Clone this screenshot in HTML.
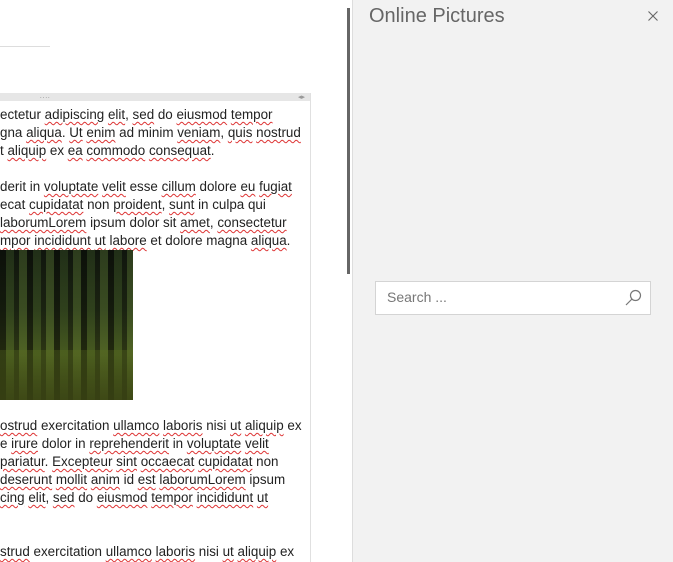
<!DOCTYPE html>
<html><head><style>
body{margin:0;width:673px;height:562px;overflow:hidden;background:#fff;position:relative;font-family:"Liberation Sans",sans-serif}
.t{position:absolute;left:0;font-size:13.4px;color:#222;white-space:nowrap;line-height:18px}
.u{text-decoration:underline wavy #d33;text-decoration-thickness:1px;text-underline-offset:2px}
</style></head><body>
<div style="position:absolute;left:0;top:46px;width:50px;height:1px;background:#ddd"></div>
<div style="position:absolute;left:0;top:93px;width:311px;height:8px;background:#e6e6e6"></div>
<div style="position:absolute;left:40px;top:96px;font-size:6px;color:#777;letter-spacing:1px;line-height:2px">....</div>
<div style="position:absolute;left:298px;top:93px;font-size:7px;color:#999">◂▸</div>
<div style="position:absolute;left:310px;top:93px;width:1px;height:469px;background:#e0e0e0"></div>
<div class="t" style="top:106px">ectetur <span class="u">adipiscing</span> <span class="u">elit</span>, <span class="u">sed</span> do <span class="u">eiusmod</span> <span class="u">tempor</span></div>
<div class="t" style="top:124px">gna <span class="u">aliqua</span>. <span class="u">Ut</span> <span class="u">enim</span> ad minim <span class="u">veniam</span>, <span class="u">quis</span> <span class="u">nostrud</span></div>
<div class="t" style="top:142px">t <span class="u">aliquip</span> ex <span class="u">ea</span> <span class="u">commodo</span> <span class="u">consequat</span>.</div>
<div class="t" style="top:178px">derit in <span class="u">voluptate</span> <span class="u">velit</span> esse <span class="u">cillum</span> dolore <span class="u">eu</span> <span class="u">fugiat</span></div>
<div class="t" style="top:196px">ecat <span class="u">cupidatat</span> non <span class="u">proident</span>, <span class="u">sunt</span> in culpa qui</div>
<div class="t" style="top:214px"> <span class="u">laborumLorem</span> ipsum dolor sit <span class="u">amet</span>, <span class="u">consectetur</span></div>
<div class="t" style="top:232px"><span class="u">mpor</span> <span class="u">incididunt</span> <span class="u">ut</span> <span class="u">labore</span> et dolore magna <span class="u">aliqua</span>.</div>
<div style="position:absolute;left:0;top:250px;width:133px;height:150px;background:linear-gradient(180deg,#1a2416 0%,#2c3a1c 40%,#4a5a20 70%,#3a4418 100%)">
<div style="position:absolute;inset:0;background:repeating-linear-gradient(90deg,rgba(0,0,0,.55) 0 6px,rgba(60,90,30,.2) 6px 14px,rgba(0,0,0,.4) 14px 19px,rgba(100,130,50,.25) 19px 27px)"></div>
<div style="position:absolute;left:0;right:0;bottom:0;height:50px;background:linear-gradient(180deg,rgba(90,110,30,.3),rgba(60,70,20,.8))"></div></div>
<div class="t" style="top:417px"><span class="u">ostrud</span> exercitation <span class="u">ullamco</span> <span class="u">laboris</span> nisi <span class="u">ut</span> <span class="u">aliquip</span> ex</div>
<div class="t" style="top:435px">e <span class="u">irure</span> dolor in <span class="u">reprehenderit</span> in <span class="u">voluptate</span> <span class="u">velit</span></div>
<div class="t" style="top:453px"><span class="u">pariatur</span>. <span class="u">Excepteur</span> <span class="u">sint</span> <span class="u">occaecat</span> <span class="u">cupidatat</span> non</div>
<div class="t" style="top:471px"><span class="u">deserunt</span> <span class="u">mollit</span> <span class="u">anim</span> id <span class="u">est</span> <span class="u">laborumLorem</span> ipsum</div>
<div class="t" style="top:489px"><span class="u">cing</span> <span class="u">elit</span>, <span class="u">sed</span> do <span class="u">eiusmod</span> <span class="u">tempor</span> <span class="u">incididunt</span> <span class="u">ut</span></div>
<div class="t" style="top:543px"><span class="u">strud</span> exercitation <span class="u">ullamco</span> <span class="u">laboris</span> nisi <span class="u">ut</span> <span class="u">aliquip</span> ex</div>
<div style="position:absolute;left:347px;top:8px;width:3px;height:266px;background:#666"></div>
<div style="position:absolute;left:352px;top:0;width:321px;height:562px;background:#f2f2f2;border-left:1px solid #ddd"></div>
<div style="position:absolute;left:369px;top:5px;font-size:20px;color:#666">Online Pictures</div>
<svg style="position:absolute;left:648px;top:11px" width="10" height="10" viewBox="0 0 10 10"><path d="M0.5 0.5L9.5 9.5M9.5 0.5L0.5 9.5" stroke="#666" stroke-width="1.1"/></svg>
<div style="position:absolute;left:375px;top:281px;width:274px;height:32px;background:#fff;border:1px solid #d4d4d4"></div>
<div style="position:absolute;left:387px;top:289px;font-size:14px;color:#777">Search ...</div>
<svg style="position:absolute;left:624px;top:288px" width="20" height="20" viewBox="0 0 20 20"><circle cx="11.5" cy="7.5" r="5" fill="none" stroke="#777" stroke-width="1.2"/><path d="M8 11 L2 17" stroke="#777" stroke-width="1.2"/></svg>
</body></html>
